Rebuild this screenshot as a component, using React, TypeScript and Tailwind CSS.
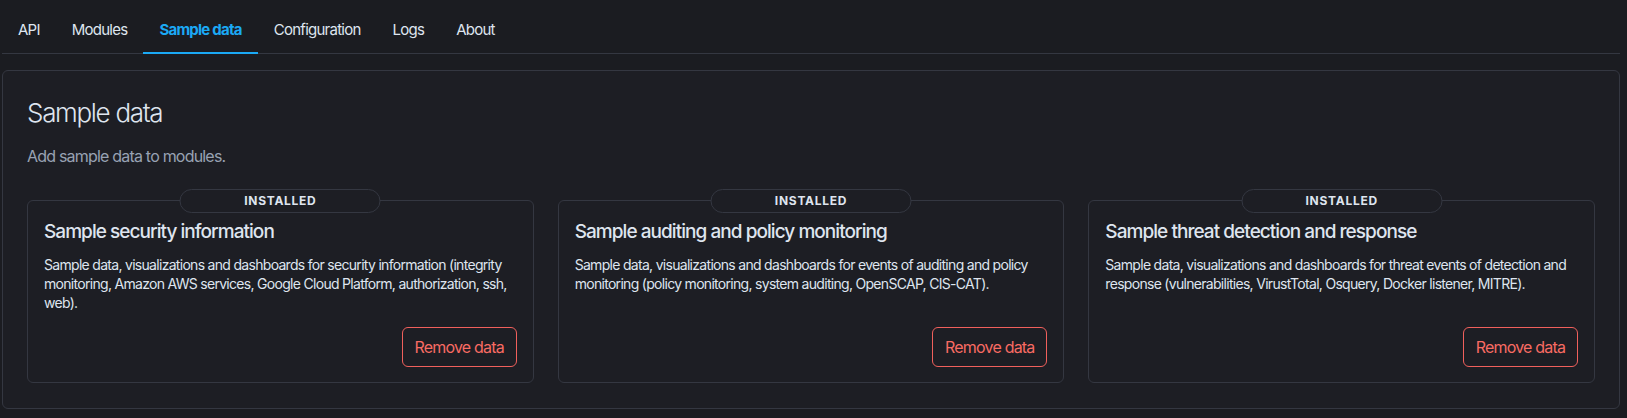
import React from "react";

const tabs = ["API", "Modules", "Sample data", "Configuration", "Logs", "About"];

const cards = [
  {
    title: "Sample security information",
    desc: "Sample data, visualizations and dashboards for security information (integrity monitoring, Amazon AWS services, Google Cloud Platform, authorization, ssh, web).",
  },
  {
    title: "Sample auditing and policy monitoring",
    desc: "Sample data, visualizations and dashboards for events of auditing and policy monitoring (policy monitoring, system auditing, OpenSCAP, CIS-CAT).",
  },
  {
    title: "Sample threat detection and response",
    desc: "Sample data, visualizations and dashboards for threat events of detection and response (vulnerabilities, VirustTotal, Osquery, Docker listener, MITRE).",
  },
];

export default function App() {
  return (
    <div className="min-h-screen bg-[#1b1c21] pl-[2px] pr-[7px] pt-[9px] font-['Inter','Noto_Sans',sans-serif] text-[#dfe5ef]">
      <div className="flex border-b border-[#343741]">
        {tabs.map((t) => {
          const active = t === "Sample data";
          return (
            <div
              key={t}
              className={
                active
                  ? "relative flex h-[44px] items-center px-4 pb-[1px] text-[15px] font-bold tracking-[-0.05em] text-[#1ba9f5]"
                  : "relative flex h-[44px] items-center px-4 pb-[1px] text-[15px] font-normal tracking-[-0.05em] text-[#dfe5ef]"
              }
            >
              {t}
              {active && (
                <span className="absolute -bottom-[1px] left-0 right-0 h-[2px] bg-[#1ba9f5]" />
              )}
            </div>
          );
        })}
      </div>

      <div className="mt-4 rounded-[6px] border border-[#343741] bg-[#1d1e24] px-6 pt-6 pb-[25px]">
        <h1 className="text-[26px] font-light leading-[35px] tracking-[-0.05em] text-[#dfe5ef]">Sample data</h1>
        <p className="mt-[14px] text-[16px] leading-6 tracking-[-0.05em] text-[#98a2b3]">Add sample data to modules.</p>

        <div className="mt-[32px] grid grid-cols-3 gap-6">
          {cards.map((c) => (
            <div
              key={c.title}
              className="relative flex flex-col rounded-[6px] border border-[#343741] bg-[#1d1e24] px-4 pt-4 pb-[15px]"
            >
              <div className="absolute -top-[12px] left-1/2 flex h-[24px] w-[201px] -translate-x-1/2 items-center justify-center rounded-full border border-[#343741] bg-[#1d1e24] text-[12px] font-bold tracking-[0.06em] text-[#dfe5ef]">
                INSTALLED
              </div>
              <h2 className="text-[19px] font-medium leading-[29px] tracking-[-0.05em] text-[#dfe5ef]">{c.title}</h2>
              <p className="mt-[9px] text-[14px] leading-[19px] tracking-[-0.05em] text-[#dfe5ef]">{c.desc}</p>
              <div className="mt-auto flex justify-end pt-[15px]">
                <button className="flex h-[40px] w-[115px] items-center justify-center rounded-[6px] border border-[#f0605c] bg-transparent text-[16px] tracking-[-0.05em] text-[#f86b63]">
                  Remove data
                </button>
              </div>
            </div>
          ))}
        </div>
      </div>
    </div>
  );
}
